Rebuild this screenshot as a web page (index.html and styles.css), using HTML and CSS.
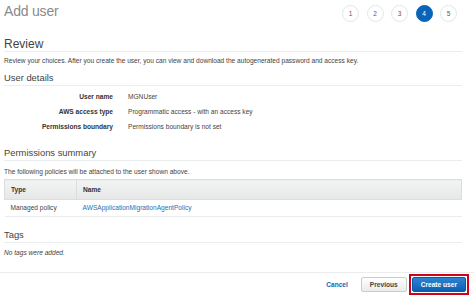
FILE: index.html
```html
<!DOCTYPE html>
<html lang="en">

<head>
    <meta charset="UTF-8">
    <meta name="viewport" content="width=device-width, initial-scale=1.0">
    <title>Add user</title>
    <link rel="stylesheet" href="styles.css">
</head>

<body>
    <div class="page">
        <header class="top">
            <h1>Add user</h1>
            <ol class="steps">
                <li class="step">1</li>
                <li class="step">2</li>
                <li class="step">3</li>
                <li class="step active">4</li>
                <li class="step">5</li>
            </ol>
        </header>

        <section class="review">
            <h2>Review</h2>
            <p class="note">Review your choices. After you create the user, you can view and download the autogenerated password and access key.</p>
        </section>

        <section class="details">
            <h3>User details</h3>
            <dl class="props">
                <dt>User name</dt>
                <dd>MGNUser</dd>
                <dt>AWS access type</dt>
                <dd>Programmatic access - with an access key</dd>
                <dt>Permissions boundary</dt>
                <dd>Permissions boundary is not set</dd>
            </dl>
        </section>

        <section class="perms">
            <h3>Permissions summary</h3>
            <p class="note">The following policies will be attached to the user shown above.</p>
            <table class="policies">
                <thead>
                    <tr>
                        <th class="col-type">Type</th>
                        <th>Name</th>
                    </tr>
                </thead>
                <tbody>
                    <tr>
                        <td>Managed policy</td>
                        <td><a href="#">AWSApplicationMigrationAgentPolicy</a></td>
                    </tr>
                </tbody>
            </table>
        </section>

        <section class="tags">
            <h3>Tags</h3>
            <p class="note empty">No tags were added.</p>
        </section>
    </div>

    <footer class="actions">
        <a href="#" class="cancel">Cancel</a>
        <button class="btn">Previous</button>
        <span class="highlight"><button class="btn primary">Create user</button></span>
    </footer>
</body>

</html>
```

FILE: styles.css
```css
/* Reset */
body,
h1,
h2,
h3,
p,
ol,
dl,
dd {
    margin: 0;
    padding: 0;
}

body {
    background-color: #fff;
    color: #444;
    font-family: 'Liberation Sans', Arial, Helvetica, sans-serif;
    font-size: 6.6px;
    line-height: 10px;
}

.page {
    padding: 0 12px 0 4px;
}

/* Title and wizard steps */
.top {
    display: flex;
    justify-content: space-between;
    align-items: flex-start;
    height: 30px;
}

.top h1 {
    font-size: 14px;
    font-weight: normal;
    line-height: 20px;
    padding-top: 1px;
    color: #8a8a8a;
    letter-spacing: -0.2px;
}

.steps {
    display: flex;
    gap: 7.5px;
    list-style: none;
    margin: 5px 5px 0 0;
}

.step {
    width: 15px;
    height: 15px;
    border: 1px solid #e3e6e6;
    border-radius: 50%;
    display: flex;
    align-items: center;
    justify-content: center;
    font-size: 6.5px;
    color: #545b64;
}

.step.active {
    background-color: #0b63b7;
    border-color: #0b63b7;
    color: #fff;
}

/* Section headings */
h2,
h3 {
    font-weight: normal;
    line-height: 14px;
    color: #444;
    border-bottom: 1px solid #eaeded;
}

h2 {
    font-size: 12px;
}

h3 {
    font-size: 9.4px;
}

.review {
    padding-top: 7px;
}

.note {
    margin-top: 2px;
}

.review .note {
    margin-top: 4px;
}

.details h3 {
    margin-top: 5px;
}

/* User details list */
.props {
    display: grid;
    grid-template-columns: 109px 1fr;
    column-gap: 15px;
    line-height: 15px;
    margin-top: 3px;
}

.props dt {
    font-weight: bold;
    text-align: right;
    color: #333;
}

.perms h3 {
    margin-top: 12px;
}

.perms .note {
    margin-top: 6px;
}

/* Policy table */
.policies {
    width: 100%;
    margin-top: 2px;
    border-collapse: collapse;
    font-size: 6.6px;
}

.policies th {
    height: 19px;
    padding: 0 6px;
    text-align: left;
    font-weight: bold;
    color: #333;
    background: linear-gradient(#f2f3f3, #e6e7e7);
    border: 1px solid #dcdede;
}

.policies th.col-type {
    width: 59px;
}

.policies td {
    height: 16px;
    padding: 0 6px;
    border-bottom: 1px solid #eaeded;
}

.policies a {
    color: #1f6fb5;
    text-decoration: none;
}

.tags h3 {
    margin-top: 11px;
}

.tags .note {
    margin-top: 5px;
}

.empty {
    font-style: italic;
}

/* Footer buttons */
.actions {
    margin-top: 14px;
    border-top: 1px solid #eaeded;
    display: flex;
    justify-content: flex-end;
    align-items: center;
    gap: 13px;
    padding: 1px 5px 0 0;
}

.cancel {
    color: #1a5fa8;
    font-weight: bold;
    text-decoration: none;
}

.btn {
    height: 15px;
    padding: 0 8px;
    font-family: inherit;
    font-size: 6.6px;
    font-weight: bold;
    color: #444;
    background: linear-gradient(#fff, #e9ebed);
    border: 1px solid #ccc;
    border-radius: 2px;
}

.highlight {
    display: inline-block;
    border: 2px solid #d0021b;
    padding: 1px;
    margin-left: -11px;
}

.btn.primary {
    display: block;
    padding: 0 8px;
    color: #fff;
    background: linear-gradient(#2d83d2, #0c60b3);
    border-color: #0c5aa6;
}
```
